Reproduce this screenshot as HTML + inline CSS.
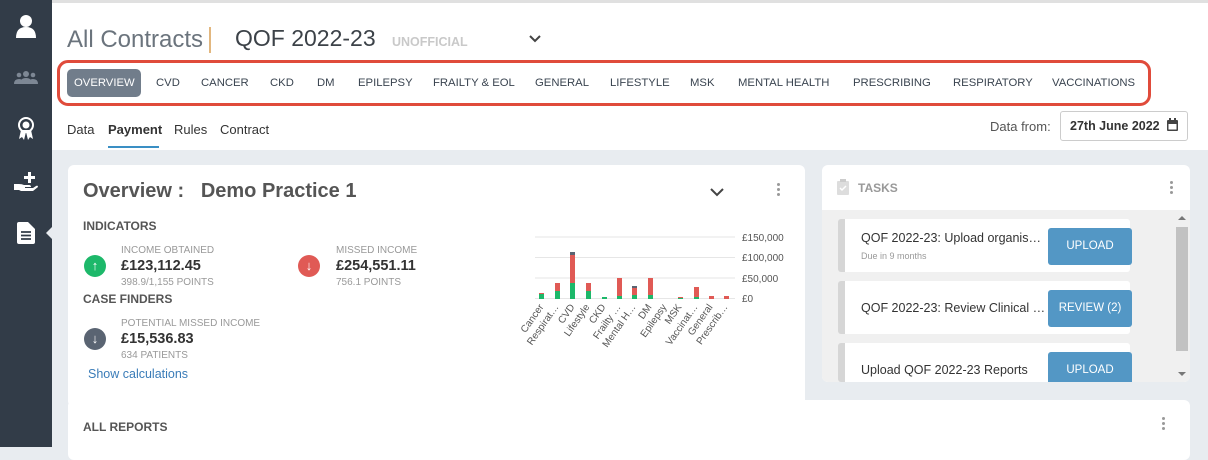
<!DOCTYPE html>
<html><head><meta charset="utf-8"><style>
*{box-sizing:border-box;margin:0;padding:0}
body{width:1208px;height:447px;overflow:hidden;background:#e8ecf0;font-family:"Liberation Sans",sans-serif;position:relative;color:#444}
.side{position:absolute;left:0;top:0;width:52px;height:447px;background:#323c48}
.hdr{position:absolute;left:52px;top:0;width:1156px;height:150px;background:#fff;border-top:3px solid #e0e0e0}
.abs{position:absolute;white-space:nowrap}
.tab{position:absolute;top:77px;font-size:11.3px;color:#3a4450}
.card{position:absolute;background:#fff;border-radius:6px}
.lbl{font-size:10px;color:#999}
.big{font-size:14.5px;font-weight:bold;color:#333}
.circ{position:absolute;width:22px;height:22px;border-radius:50%;color:#fff;font-size:13px;text-align:center;line-height:22px}
.task{position:absolute;left:838px;width:292px;height:53px;background:#fff;border-left:7px solid #d6d6d6;border-radius:3px}
.btn{position:absolute;left:1048px;width:84px;height:37px;background:#5397c5;border-radius:3px;color:#fff;font-size:11.5px;text-align:center;line-height:37px}
.dots{position:absolute;width:3px;height:3px;background:#999;border-radius:50%;box-shadow:0 5px #999,0 10px #999}
</style></head><body>
<div class="side">
<svg class="abs" style="left:16px;top:14px" width="20" height="24" viewBox="0 0 20 24"><circle cx="10" cy="7" r="6" fill="#fff"/><path d="M0 24 Q0 13 10 13 Q20 13 20 24Z" fill="#fff"/></svg>
<svg class="abs" style="left:14px;top:70px" width="24" height="14" viewBox="0 0 24 14"><g fill="#7d8794"><circle cx="12" cy="4" r="3"/><circle cx="5" cy="5" r="2.3"/><circle cx="19" cy="5" r="2.3"/><path d="M6 14 Q6 8 12 8 Q18 8 18 14Z"/><path d="M0 14 Q0 9 5 9 Q8 9 8 11 L7 14Z"/><path d="M24 14 Q24 9 19 9 Q16 9 16 11 L17 14Z"/></g></svg>
<svg class="abs" style="left:18px;top:117px" width="16" height="24" viewBox="0 0 16 24"><circle cx="8" cy="8" r="7" fill="none" stroke="#fff" stroke-width="2"/><circle cx="8" cy="8" r="3.5" fill="#fff"/><path d="M3 13 L1 22 L4 20 L6 23 L8 15 L10 23 L12 20 L15 22 L13 13" fill="#fff"/></svg>
<svg class="abs" style="left:14px;top:172px" width="24" height="20" viewBox="0 0 24 20"><path d="M14 0h3v4h4v3h-4v4h-3v-4h-4v-3h4z" fill="#fff"/><path d="M0 12h5q3 0 5 1h5q2 0 2 2h-6v1h8l3-2q2-1 2 1l-5 4h-12l-2-1h-5z" fill="#fff"/></svg>
<svg class="abs" style="left:17px;top:222px" width="18" height="22" viewBox="0 0 18 22"><path d="M2 0h9l7 7v13q0 2-2 2h-14q-2 0-2-2v-18q0-2 2-2z" fill="#fff"/><path d="M4 10h10M4 13.5h10M4 17h10" stroke="#323c48" stroke-width="1.8"/></svg>
<div class="abs" style="left:46px;top:226px;width:0;height:0;border-top:7px solid transparent;border-bottom:7px solid transparent;border-right:7px solid #e8ecf0"></div>
</div>
<div class="hdr"></div>
<div class="abs" style="left:67px;top:26px;font-size:24px;color:#6b747d;font-weight:300">All Contracts</div>
<div class="abs" style="left:209px;top:27px;width:2px;height:26px;background:#e2b77f"></div>
<div class="abs" style="left:235px;top:25px;font-size:23px;color:#3c4248">QOF 2022-23</div>
<div class="abs" style="left:392px;top:35px;font-size:12.5px;color:#c9c9c9;font-weight:bold">UNOFFICIAL</div>
<svg class="abs" style="left:528px;top:34px" width="14" height="10"><path d="M2 2l5 5 5-5" stroke="#444" stroke-width="2" fill="none"/></svg>
<div class="abs" style="left:57px;top:60px;width:1094px;height:46px;border:3px solid #e04b3b;border-radius:11px"></div>
<div class="abs" style="left:67px;top:69px;width:74px;height:28px;background:#717d8b;border-radius:5px"></div>
<div class="tab" style="left:74px;color:#fff">OVERVIEW</div>
<div class="tab" style="left:156px">CVD</div>
<div class="tab" style="left:201px">CANCER</div>
<div class="tab" style="left:270px">CKD</div>
<div class="tab" style="left:317px">DM</div>
<div class="tab" style="left:358px">EPILEPSY</div>
<div class="tab" style="left:433px">FRAILTY &amp; EOL</div>
<div class="tab" style="left:535px">GENERAL</div>
<div class="tab" style="left:610px">LIFESTYLE</div>
<div class="tab" style="left:690px">MSK</div>
<div class="tab" style="left:738px">MENTAL HEALTH</div>
<div class="tab" style="left:853px">PRESCRIBING</div>
<div class="tab" style="left:953px">RESPIRATORY</div>
<div class="tab" style="left:1052px">VACCINATIONS</div>
<div class="abs" style="left:67px;top:122px;font-size:13px;color:#333">Data</div>
<div class="abs" style="left:108px;top:122px;font-size:13px;color:#333;font-weight:bold">Payment</div>
<div class="abs" style="left:108px;top:146px;width:51px;height:2px;background:#3a8fc4"></div>
<div class="abs" style="left:174px;top:122px;font-size:13px;color:#333">Rules</div>
<div class="abs" style="left:220px;top:122px;font-size:13px;color:#333">Contract</div>
<div class="abs" style="left:990px;top:119px;font-size:13px;color:#555">Data from:</div>
<div class="abs" style="left:1060px;top:111px;width:128px;height:30px;border:1px solid #ccc;border-radius:3px;font-size:12.5px;font-weight:bold;color:#333;padding:7px 0 0 9px">27th June 2022</div>
<svg class="abs" style="left:1166px;top:118px" width="13" height="14"><rect x="1" y="2" width="11" height="11" rx="1" fill="#444"/><rect x="2.5" y="6" width="8" height="5.5" fill="#fff"/><rect x="3" y="0" width="2" height="3" fill="#444"/><rect x="8" y="0" width="2" height="3" fill="#444"/></svg>

<div class="card" style="left:68px;top:165px;width:737px;height:242px"></div>
<div class="abs" style="left:83px;top:180px;font-size:20px;font-weight:bold;color:#555">Overview :&nbsp;&nbsp; Demo Practice 1</div>
<svg class="abs" style="left:709px;top:187px" width="16" height="10"><path d="M2 2l6 6 6-6" stroke="#444" stroke-width="2" fill="none"/></svg>
<div class="dots" style="left:777px;top:183px"></div>
<div class="abs" style="left:83px;top:219px;font-size:12px;font-weight:bold;color:#555">INDICATORS</div>
<div class="abs" style="left:83px;top:292px;font-size:12px;font-weight:bold;color:#555">CASE FINDERS</div>
<div class="circ" style="left:84px;top:255px;background:#1db86a">↑</div>
<div class="abs lbl" style="left:121px;top:245px">INCOME OBTAINED</div>
<div class="abs big" style="left:121px;top:258px">£123,112.45</div>
<div class="abs lbl" style="left:121px;top:277px">398.9/1,155 POINTS</div>
<div class="circ" style="left:298px;top:255px;background:#e05a55">↓</div>
<div class="abs lbl" style="left:336px;top:245px">MISSED INCOME</div>
<div class="abs big" style="left:336px;top:258px">£254,551.11</div>
<div class="abs lbl" style="left:336px;top:277px">756.1 POINTS</div>
<div class="circ" style="left:84px;top:328px;background:#5a6472">↓</div>
<div class="abs lbl" style="left:121px;top:318px">POTENTIAL MISSED INCOME</div>
<div class="abs big" style="left:121px;top:331px">£15,536.83</div>
<div class="abs lbl" style="left:121px;top:350px">634 PATIENTS</div>
<div class="abs" style="left:88px;top:367px;font-size:12.5px;color:#3a7cb8">Show calculations</div>

<svg class="abs" style="left:500px;top:225px" width="300" height="135" font-family="Liberation Sans" font-size="10" fill="#555">
<g stroke="#e6e6e6"><line x1="35" y1="12" x2="235" y2="12"/><line x1="35" y1="32.5" x2="235" y2="32.5"/><line x1="35" y1="53" x2="235" y2="53"/><line x1="35" y1="73.5" x2="235" y2="73.5"/></g>
<text x="242" y="16">£150,000</text><text x="242" y="36">£100,000</text><text x="242" y="57">£50,000</text><text x="242" y="77">£0</text>
<g fill="#e05a55"><rect x="39" y="68" width="5" height="6"/><rect x="55" y="58" width="5" height="16"/><rect x="70" y="29" width="5" height="45"/><rect x="86" y="58" width="5" height="16"/><rect x="117" y="53" width="5" height="21"/><rect x="132" y="63" width="5" height="11"/><rect x="148" y="53" width="5" height="21"/><rect x="178" y="72" width="5" height="2"/><rect x="194" y="62" width="5" height="12"/><rect x="209" y="71" width="5" height="3"/><rect x="224" y="71" width="5" height="3"/></g>
<g fill="#1db86a"><rect x="39" y="69" width="5" height="5"/><rect x="55" y="66" width="5" height="8"/><rect x="70" y="58" width="5" height="16"/><rect x="86" y="66" width="5" height="8"/><rect x="102" y="72" width="5" height="2"/><rect x="117" y="71" width="5" height="3"/><rect x="132" y="70" width="5" height="4"/><rect x="148" y="70" width="5" height="4"/><rect x="178" y="73" width="5" height="1"/><rect x="194" y="72" width="5" height="2"/></g>
<rect x="70" y="27" width="5" height="3" fill="#5a6472"/><rect x="132" y="61" width="5" height="2" fill="#5a6472"/>
<g text-anchor="end">
<text transform="translate(44,82) rotate(-55)">Cancer</text><text transform="translate(59,82) rotate(-55)">Respirat…</text><text transform="translate(75,82) rotate(-55)">CVD</text><text transform="translate(90,82) rotate(-55)">Lifestyle</text><text transform="translate(106,82) rotate(-55)">CKD</text><text transform="translate(121,82) rotate(-55)">Frailty …</text><text transform="translate(136,82) rotate(-55)">Mental H…</text><text transform="translate(152,82) rotate(-55)">DM</text><text transform="translate(167,82) rotate(-55)">Epilepsy</text><text transform="translate(182,82) rotate(-55)">MSK</text><text transform="translate(198,82) rotate(-55)">Vaccinat…</text><text transform="translate(213,82) rotate(-55)">General</text><text transform="translate(228,82) rotate(-55)">Prescrib…</text>
</g></svg>

<div class="card" style="left:822px;top:165px;width:368px;height:217px;overflow:hidden"><div style="position:absolute;left:0;top:45px;width:368px;height:172px;background:#f0f0f0"></div></div>
<svg class="abs" style="left:837px;top:179px" width="12" height="16"><rect x="0" y="2" width="12" height="14" rx="1" fill="#ddd"/><rect x="3" y="0" width="6" height="3" fill="#ccc"/><path d="M3 9l2 2 4-4" stroke="#fff" stroke-width="1.5" fill="none"/></svg>
<div class="abs" style="left:858px;top:181px;font-size:12px;font-weight:bold;color:#999">TASKS</div>
<div class="dots" style="left:1170px;top:181px"></div>
<div class="abs" style="left:1176px;top:227px;width:12px;height:124px;background:#c2c2c2"></div>
<div class="abs" style="left:1178px;top:216px;width:0;height:0;border-left:4px solid transparent;border-right:4px solid transparent;border-bottom:4px solid #777"></div>
<div class="abs" style="left:1178px;top:372px;width:0;height:0;border-left:4px solid transparent;border-right:4px solid transparent;border-top:4px solid #777"></div>
<div class="task" style="top:219px"></div>
<div class="abs" style="left:861px;top:231px;font-size:12.5px;color:#333">QOF 2022-23: Upload organis…</div>
<div class="abs" style="left:861px;top:251px;font-size:9px;color:#999">Due in 9 months</div>
<div class="btn" style="top:228px">UPLOAD</div>
<div class="task" style="top:281px"></div>
<div class="abs" style="left:861px;top:301px;font-size:12.5px;color:#333">QOF 2022-23: Review Clinical …</div>
<div class="btn" style="top:290px">REVIEW (2)</div>
<div class="task" style="top:343px;height:39px"></div>
<div class="abs" style="left:861px;top:363px;font-size:12.5px;color:#333">Upload QOF 2022-23 Reports</div>
<div class="btn" style="top:352px;height:30px;border-radius:3px 3px 0 0;line-height:37px">UPLOAD</div>

<div class="card" style="left:68px;top:400px;width:1122px;height:60px"></div>
<div class="abs" style="left:83px;top:420px;font-size:12px;font-weight:bold;color:#555">ALL REPORTS</div>
<div class="dots" style="left:1162px;top:417px"></div>
</body></html>
